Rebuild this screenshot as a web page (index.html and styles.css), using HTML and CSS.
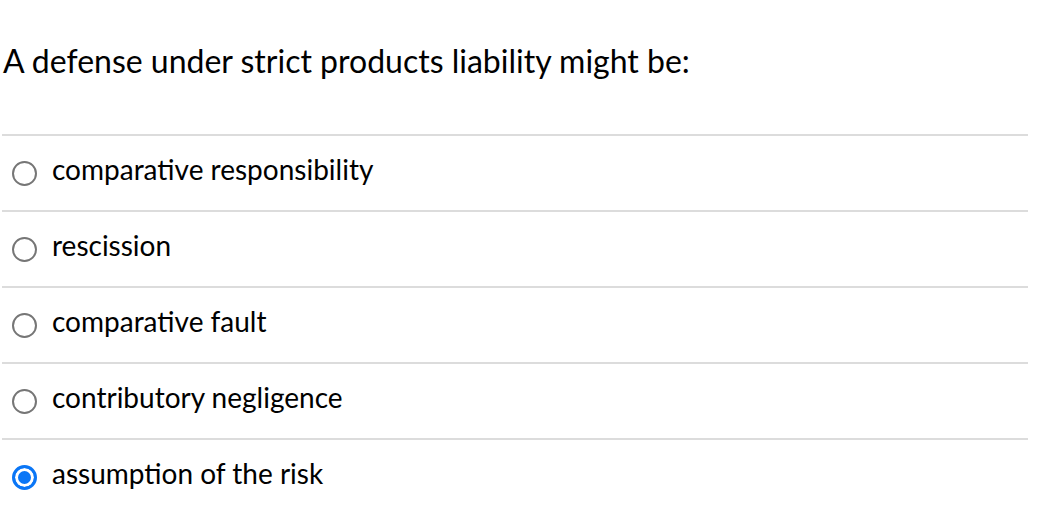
FILE: index.html
```html
<!DOCTYPE html>
<html>
<head>
<meta charset="utf-8">
<link rel="stylesheet" href="styles.css">
</head>
<body>
<div class="question">
  <h1 class="prompt">A defense under strict products liability might be:</h1>
  <ul class="answers">
    <li class="answer"><span class="radio"></span><span class="label">comparative responsibility</span></li>
    <li class="answer"><span class="radio"></span><span class="label">rescission</span></li>
    <li class="answer"><span class="radio"></span><span class="label">comparative fault</span></li>
    <li class="answer"><span class="radio"></span><span class="label">contributory negligence</span></li>
    <li class="answer"><span class="radio checked"></span><span class="label">assumption of the risk</span></li>
  </ul>
</div>
</body>
</html>
```
FILE: styles.css
```css
html, body {
  margin: 0;
  padding: 0;
  background: #fff;
}
body {
  font-family: Lato, "Open Sans", sans-serif;
  color: #000;
}
.question {
  width: 1026px;
  padding-left: 2px;
}
.prompt {
  margin: 0;
  padding: 41px 0 53px 1px;
  font-size: 32px;
  font-weight: 400;
  line-height: 40px;
  border-bottom: 2px solid #dcdcdc;
}
.answers {
  list-style: none;
  margin: 0;
  padding: 0;
}
.answer {
  display: flex;
  align-items: center;
  height: 74px;
  border-bottom: 2px solid #dcdcdc;
}
.answer:last-child {
  border-bottom: none;
}
.radio {
  box-sizing: border-box;
  width: 25px;
  height: 25px;
  margin-left: 10px;
  margin-right: 15px;
  border: 2px solid #767676;
  border-radius: 50%;
  flex: none;
}
.radio.checked {
  border: 3px solid #0a76f6;
  background: #0a76f6;
  box-shadow: inset 0 0 0 3px #fff;
}
.label {
  font-size: 28px;
  line-height: 34px;
  padding-bottom: 8px;
}
```
